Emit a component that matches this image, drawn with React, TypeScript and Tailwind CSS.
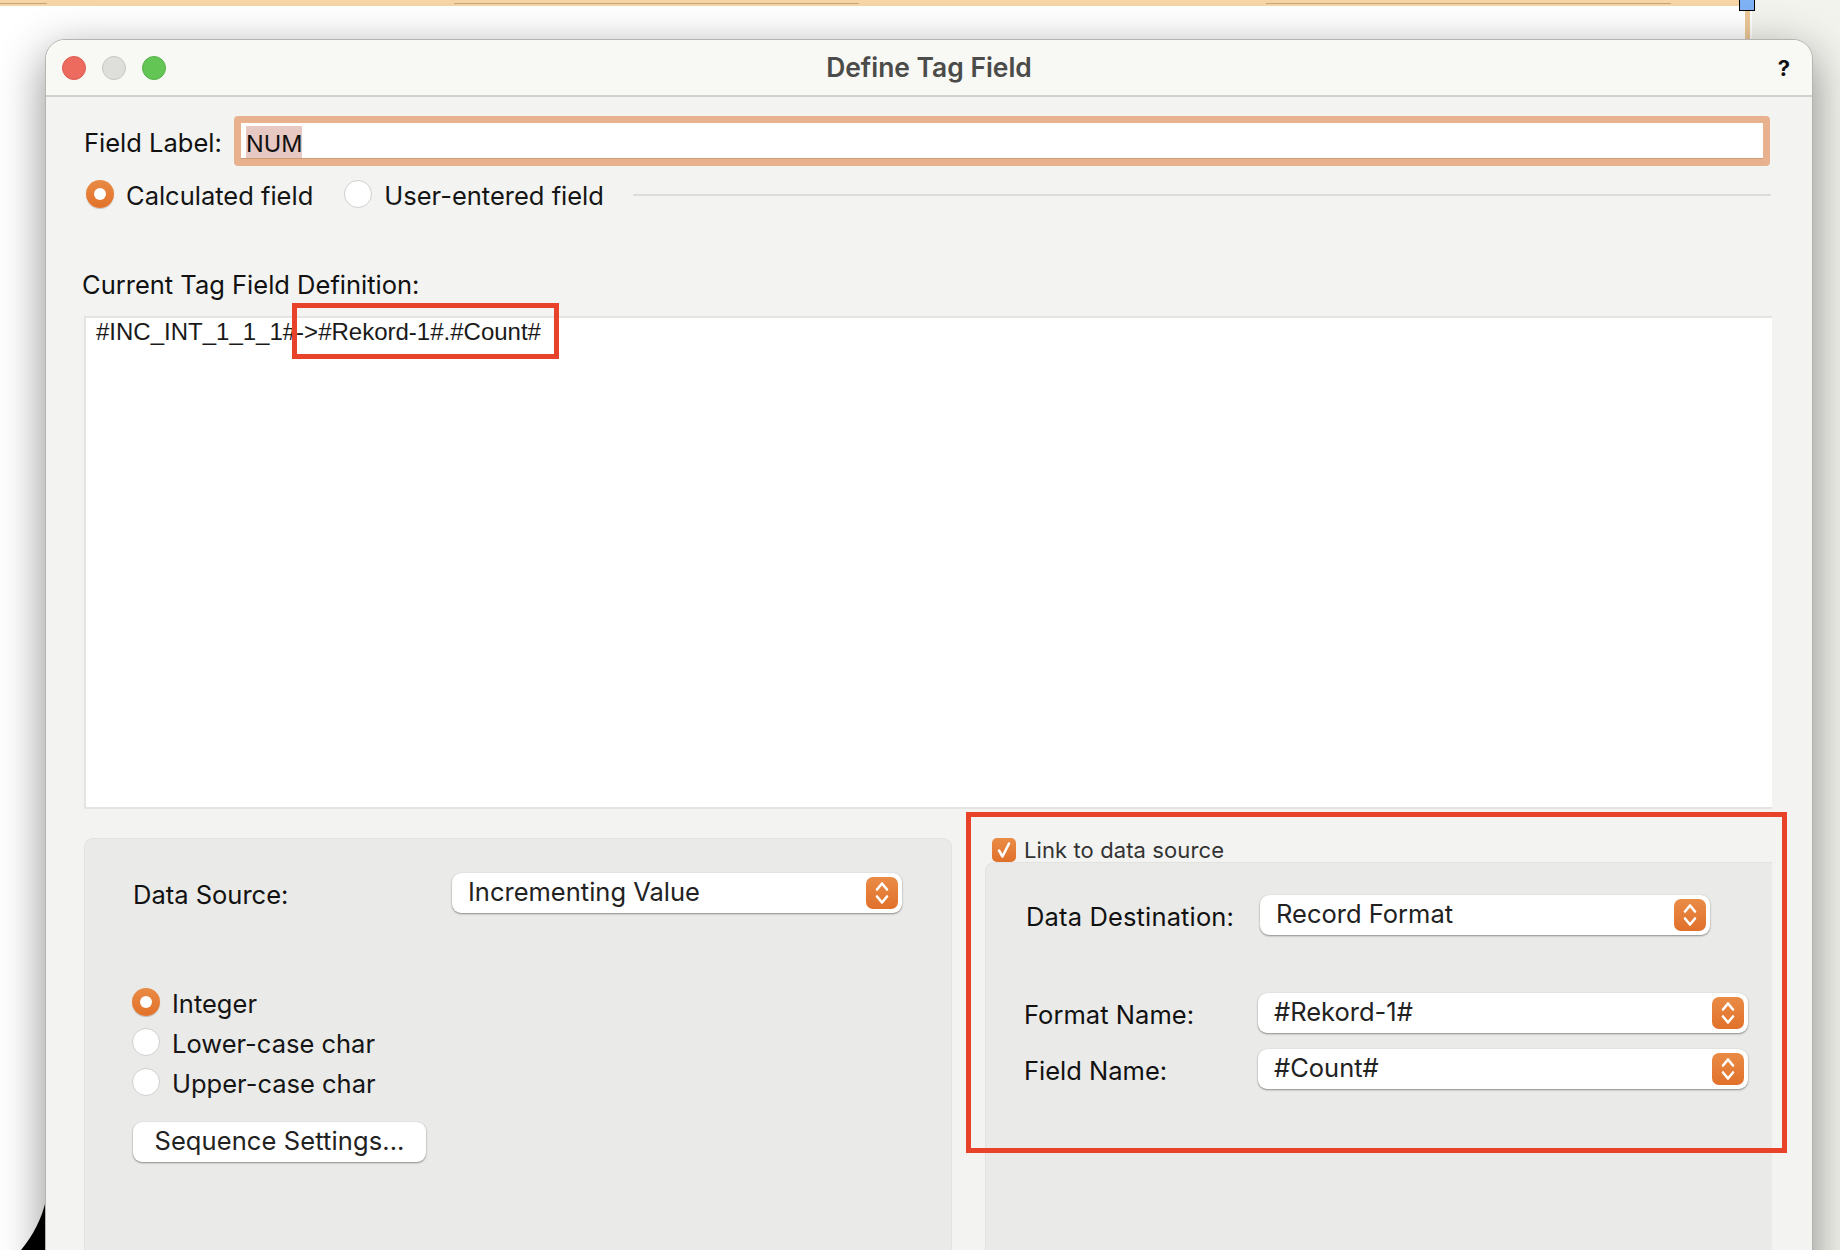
import type { ReactNode } from 'react';

function Radio({ checked, label, gap }: { checked?: boolean; label: string; gap: string }) {
  return (
    <div className={`flex h-[28px] items-center ${gap}`}>
      {checked ? (
        <div className="flex h-[28px] w-[28px] items-center justify-center rounded-full bg-gradient-to-b from-[#e98a44] to-[#e2722a] shadow-[0_1px_1px_rgba(0,0,0,0.2)]">
          <div className="h-[12px] w-[12px] rounded-full bg-white"></div>
        </div>
      ) : (
        <div className="h-[28px] w-[28px] rounded-full border border-[#d0d0ce] bg-white"></div>
      )}
      <span className="mt-[4px] text-[25.5px] leading-[28px] text-[#151515]">{label}</span>
    </div>
  );
}

function Stepper() {
  return (
    <div className="flex h-[32px] w-[32px] items-center justify-center rounded-[7px] bg-gradient-to-b from-[#ea8c46] to-[#e0702a]">
      <svg width="16" height="26" viewBox="0 0 16 26" fill="none" stroke="white" strokeWidth="2.6" strokeLinecap="round" strokeLinejoin="round">
        <path d="M3 9.5 L8 3.5 L13 9.5" />
        <path d="M3 16.5 L8 22.5 L13 16.5" />
      </svg>
    </div>
  );
}

function Select({ value, width }: { value: string; width: string }) {
  return (
    <div className={`flex h-[40px] items-center justify-between rounded-[9px] bg-white pl-[16px] pr-[4px] shadow-[0_1px_2px_rgba(0,0,0,0.4),0_0_1px_rgba(0,0,0,0.15)] ${width}`}>
      <span className="-mt-[2px] text-[25.5px] leading-[30px] text-[#222]">{value}</span>
      <Stepper />
    </div>
  );
}

function Label({ children, className }: { children: ReactNode; className?: string }) {
  return <span className={`text-[25.5px] leading-[30px] text-[#111] ${className ?? ''}`}>{children}</span>;
}

export default function App() {
  return (
    <div className="relative h-[1250px] w-[1840px] overflow-hidden bg-white font-['Inter',sans-serif]">
      {/* Desktop behind the dialog */}
      <div className="absolute bottom-0 right-0 top-0 w-[88px] bg-[#f3f3ee]"></div>
      <div className="relative flex h-[6px] w-[1752px] items-center bg-[#f5d5a6]">
        <div className="h-[1px] w-[47px] bg-[#c9a578]"></div>
        <div className="ml-[407px] h-[1px] w-[405px] bg-[#c9a578]"></div>
        <div className="ml-[407px] h-[1px] w-[405px] bg-[#c9a578]"></div>
      </div>
      <div className="absolute left-[1745px] top-0 h-[40px] w-[5px] bg-[#ecc898]"></div>
      <div className="absolute left-[1739px] top-0 h-[11px] w-[16px] border-[1.5px] border-t-0 border-black bg-[#7fb2f5]"></div>
      <svg className="absolute bottom-0 left-0" width="46" height="60" viewBox="0 0 46 60">
        <path d="M46 10 C42 28 33 46 21 60 L46 60 Z" fill="black" />
      </svg>

      {/* Dialog window */}
      <div className="relative ml-[45px] mt-[33px] h-[1300px] w-[1768px] overflow-hidden rounded-t-[20px] border border-[#b4b4b0] bg-[#f3f3f1] shadow-[0_14px_46px_rgba(0,0,0,0.45)]">
        <div className="relative flex h-[57px] items-center justify-center border-b-2 border-[#d0d0ce] bg-[#f8f8f4]">
          <div className="absolute left-[16px] top-[16px] flex gap-[16px]">
            <div className="h-[24px] w-[24px] rounded-full border border-[#dc5a52] bg-[#ec6a5e]"></div>
            <div className="h-[24px] w-[24px] rounded-full border border-[#c6c6c2] bg-[#dededa]"></div>
            <div className="h-[24px] w-[24px] rounded-full border border-[#55b048] bg-[#62c554]"></div>
          </div>
          <span className="text-[26.4px] font-semibold text-[#4b4b49]">Define Tag Field</span>
          <span className="absolute right-[22px] top-[16px] text-[22px] font-bold leading-[24px] text-[#111]">?</span>
        </div>

        <div className="pl-[38px]">
          {/* Field label */}
          <div className="mt-[19px] flex h-[50px] items-center">
            <Label className="mt-[4px] w-[150px]">Field Label:</Label>
            <div className="h-[50px] w-[1536px] rounded-[4px] border-[7px] border-[#e7b28d] bg-white pl-[5px] pt-[3px] shadow-[inset_0_-1px_0_#cf9b75]">
              <span className="inline-block h-[32px] bg-[#e8c8c2] text-[23.5px] leading-[36px] text-[#111]">NUM</span>
            </div>
          </div>

          {/* Field type */}
          <div className="mt-[14px] flex h-[28px] items-center">
            <div className="ml-[2px]">
              <Radio checked label="Calculated field" gap="gap-[12px]" />
            </div>
            <div className="ml-[31px]">
              <Radio label="User-entered field" gap="gap-[12px]" />
            </div>
            <div className="ml-[29px] mt-[2px] h-[2px] w-[1138px] bg-[#dcdcda]"></div>
          </div>

          {/* Definition */}
          <div className="mt-[62px] -ml-[2px] h-[30px] text-[25.5px] leading-[30px] text-[#111]">Current Tag Field Definition:</div>
          <div className="relative mt-[16px] h-[493px] w-[1688px] border-b-2 border-l-2 border-t-2 border-[#e4e4e2] bg-white">
            <div className="-mt-[1px] pl-[10px] font-['Liberation_Sans',sans-serif] text-[24px] leading-[30px] text-[#1a1a1a]">
              #INC_INT_1_1_1#-&gt;#Rekord-1#.#Count#
            </div>
            <div className="absolute -top-[15px] left-[206px] h-[56px] w-[267px] border-[5px] border-[#e8432a]"></div>
          </div>

          {/* Lower panels */}
          <div className="mt-[29px] flex gap-[33px]">
            <div className="h-[500px] w-[868px] rounded-[9px] border border-[#e2e2e0] bg-[#eaeae8] pl-[48px] pt-[34px]">
              <div className="flex items-start">
                <Label className="mt-[7px] w-[319px]">Data Source:</Label>
                <Select value="Incrementing Value" width="w-[450px]" />
              </div>
              <div className="-ml-[1px] mt-[75px] flex flex-col gap-[12px]">
                <Radio checked label="Integer" gap="gap-[12px]" />
                <Radio label="Lower-case char" gap="gap-[12px]" />
                <Radio label="Upper-case char" gap="gap-[12px]" />
              </div>
              <div className="mt-[26px] flex h-[40px] w-[293px] items-center justify-center rounded-[9px] bg-white pb-[2px] text-[25.5px] tracking-[0.1px] text-[#222] shadow-[0_1px_2px_rgba(0,0,0,0.4),0_0_1px_rgba(0,0,0,0.15)]">
                Sequence Settings...
              </div>
            </div>

            <div className="relative w-[787px]">
              <div className="flex h-[24px] items-center gap-[8px] pl-[7px]">
                <div className="flex h-[24px] w-[24px] items-center justify-center rounded-[5px] bg-gradient-to-b from-[#ea8c46] to-[#e0702a]">
                  <svg width="20" height="20" viewBox="0 0 20 20" fill="none" stroke="white" strokeWidth="2.6" strokeLinecap="round" strokeLinejoin="round">
                    <path d="M5 10.5 L8.5 16.5 L15 3.5" />
                  </svg>
                </div>
                <span className="text-[22px] leading-[26px] tracking-[0.1px] text-[#333]">Link to data source</span>
              </div>
              <div className="h-[500px] rounded-tl-[9px] border-l border-t border-[#e2e2e0] bg-[#eaeae8] pt-[32px]">
                <div className="flex items-start pl-[40px]">
                  <Label className="mt-[7px] w-[234px] tracking-[0.15px]">Data Destination:</Label>
                  <Select value="Record Format" width="w-[450px]" />
                </div>
                <div className="mt-[58px] flex items-start pl-[38px]">
                  <Label className="mt-[7px] w-[234px] tracking-[0.05px]">Format Name:</Label>
                  <Select value="#Rekord-1#" width="w-[490px]" />
                </div>
                <div className="mt-[16px] flex items-start pl-[38px]">
                  <Label className="mt-[7px] w-[234px]">Field Name:</Label>
                  <Select value="#Count#" width="w-[490px]" />
                </div>
              </div>
              <div className="absolute -left-[19px] -top-[26px] h-[341px] w-[821px] border-[5px] border-[#e8432a]"></div>
            </div>
          </div>
        </div>
      </div>
    </div>
  );
}
